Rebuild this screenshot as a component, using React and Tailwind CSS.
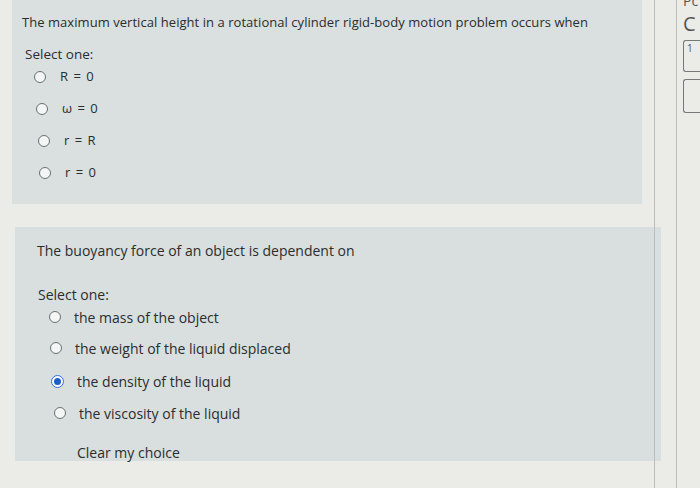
const font = { fontFamily: '"Open Sans", "Noto Sans", sans-serif' }

function Radio({ checked }) {
  return checked ? (
    <span className="inline-flex h-[13px] w-[13px] shrink-0 items-center justify-center rounded-full border-[1.5px] border-[#2f6fd6] bg-white">
      <span className="h-[7px] w-[7px] rounded-full bg-[#1d5fc8]" />
    </span>
  ) : (
    <span className="inline-block h-[12px] w-[12px] shrink-0 rounded-full border-[1.5px] border-[#6b6f72] bg-[#f4f5f5]" />
  )
}

function Option({ label, checked, indent, gap, className }) {
  return (
    <div className={`flex items-center ${className}`} style={{ paddingLeft: indent, gap }}>
      <Radio checked={checked} />
      <span>{label}</span>
    </div>
  )
}

export default function App() {
  return (
    <div className="relative flex h-[488px] w-[700px] overflow-hidden bg-[#ebebe7] text-[#2b2d2e]" style={font}>
      <div className="flex w-[648px] shrink-0 flex-col pl-3">
        {/* Question 1 */}
        <div className="h-[204px] w-[630px] bg-[#d9e0df] pl-[10px] pt-[13px] text-[13px]">
          <p className="tracking-[0.05px]">
            The maximum vertical height in a rotational cylinder rigid-body motion problem occurs when
          </p>
          <p className="mt-[11px] pl-[3px] text-[13.5px]">Select one:</p>
          <div className="mt-[3px] flex flex-col text-[13px] [word-spacing:2px]">
            <Option label="R = 0" indent={12} gap={14} className="h-[20px]" />
            <Option label="ω = 0" indent={14} gap={14} className="mt-[12px] h-[20px]" />
            <Option label="r = R" indent={16} gap={14} className="mt-[12px] h-[20px]" />
            <Option label="r = 0" indent={17} gap={14} className="mt-[12px] h-[20px]" />
          </div>
        </div>

        {/* Question 2 */}
        <div className="ml-[3px] mt-[23px] h-[234px] w-[646px] bg-[#d8dfde] pl-[22px] pt-[13px] text-[14px]">
          <p>The buoyancy force of an object is dependent on</p>
          <p className="mt-[23px] pl-[1px]">Select one:</p>
          <div className="mt-[1px] flex flex-col">
            <Option label="the mass of the object" indent={12} gap={13} className="h-[22px]" />
            <Option label="the weight of the liquid displaced" indent={13} gap={13} className="mt-[9px] h-[22px]" />
            <Option label="the density of the liquid" indent={14} gap={13} className="mt-[11px] h-[22px]" checked />
            <Option label="the viscosity of the liquid" indent={17} gap={13} className="mt-[10px] h-[22px]" />
          </div>
          <p className="mt-[18px] pl-[40px]">Clear my choice</p>
        </div>
      </div>

      {/* Sidebar edge */}
      <div className="ml-[6px] w-[22px] shrink-0 border-l border-[#bdbdb8]" />
      <div className="flex flex-1 flex-col border-l border-[#bdbdb8] pl-[6px] text-[#555]">
        <span className="-mt-[6px] text-[14px] leading-none">Pc</span>
        <span className="mt-[6px] text-[20px] leading-none">C</span>
        <div className="mt-[6px] h-[32px] w-[18px] rounded-l-[3px] border border-r-0 border-[#777] pl-[3px] text-[10px]">1</div>
        <div className="mt-[7px] h-[34px] w-[18px] rounded-l-[3px] border border-r-0 border-[#777]" />
      </div>
    </div>
  )
}
